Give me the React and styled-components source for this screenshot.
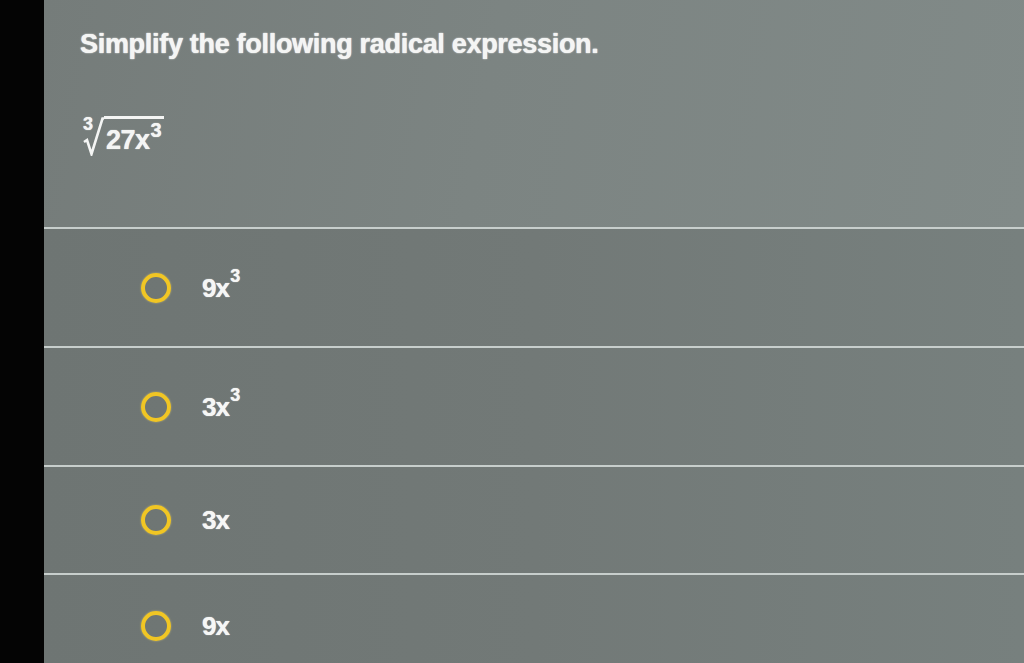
import React from "react";
import styled, { createGlobalStyle } from "styled-components";

const Global = createGlobalStyle`
  html, body { margin: 0; padding: 0; background: #050505; }
  body { font-family: "Liberation Sans", Arial, sans-serif; }
  #root { width: 1024px; height: 663px; overflow: hidden; }
`;

const Screen = styled.div`
  display: flex;
  width: 1024px;
  height: 663px;
  background: #050505;
`;

const Bezel = styled.div`
  width: 44px;
  flex: none;
  background: #040404;
`;

const Panel = styled.main`
  flex: 1;
  display: flex;
  flex-direction: column;
  overflow: hidden;
  background: linear-gradient(90deg, #6e7573 0%, #727977 50%, #77807e 100%);
`;

const Header = styled.header`
  height: 227px;
  flex: none;
  box-sizing: border-box;
  padding: 29px 0 0 36px;
  background: linear-gradient(100deg, #757c7a 0%, #7c8482 45%, #818a88 100%);
`;

const Title = styled.h1`
  margin: 0;
  font-family: "Liberation Sans", Arial, sans-serif;
  font-weight: 700;
  font-size: 27px;
  line-height: 30px;
  letter-spacing: -0.3px;
  color: #f4f5f4;
  text-shadow: 0 0 1px #ffffff, 0 0 2px rgba(255, 255, 255, 0.5);
`;

const Expr = styled.div`
  display: flex;
  align-items: flex-start;
  margin: 57px 0 0 3px;
  color: #f4f5f4;
  font-family: "Liberation Sans", Arial, sans-serif;
  font-weight: 700;
  text-shadow: 0 0 1px #ffffff;
`;

const RootSign = styled.div`
  position: relative;
  width: 21px;
  height: 40px;
  flex: none;
`;

const Index = styled.span`
  position: absolute;
  left: 0;
  top: -1px;
  font-size: 18px;
  line-height: 18px;
`;

const Radicand = styled.div`
  display: flex;
  align-items: flex-start;
  padding: 8px 3px 0 2px;
  border-top: 3px solid #f4f5f4;
  font-size: 27px;
  line-height: 26px;
  letter-spacing: -0.5px;
`;

const Sup = styled.span`
  font-size: ${(p) => p.$size}px;
  line-height: 1;
  margin-top: ${(p) => p.$raise}px;
  margin-left: 1px;
`;

const Option = styled.label`
  height: ${(p) => p.$h}px;
  flex: none;
  display: flex;
  align-items: center;
  box-sizing: border-box;
  padding-left: 97px;
  border-top: 2px solid #c7cecc;
  color: #f6f7f6;
  cursor: pointer;
`;

const Radio = styled.span`
  width: 30px;
  height: 30px;
  flex: none;
  box-sizing: border-box;
  border: 4.5px solid #f1c624;
  border-radius: 50%;
  box-shadow: 0 0 2px rgba(255, 230, 120, 0.6);
`;

const Answer = styled.span`
  display: flex;
  align-items: flex-start;
  margin-left: 31px;
  font-family: "Liberation Sans", Arial, sans-serif;
  font-weight: 700;
  font-size: 26px;
  line-height: 26px;
  letter-spacing: -0.9px;
  text-shadow: 0 0 1px #ffffff;
`;

const options = [
  { base: "9x", exp: "3", h: 119 },
  { base: "3x", exp: "3", h: 119 },
  { base: "3x", h: 108 },
  { base: "9x", h: 104 },
];

export default function App() {
  return (
    <Screen>
      <Global />
      <Bezel />
      <Panel>
        <Header>
          <Title>Simplify the following radical expression.</Title>
          <Expr>
            <RootSign>
              <Index>3</Index>
              <svg width="21" height="40" viewBox="0 0 21 40">
                <path
                  d="M1 26 L4 24 L8.5 38 L19.5 2.5 L21 2.5"
                  fill="none"
                  stroke="#f4f5f4"
                  strokeWidth="2.6"
                  strokeLinejoin="miter"
                />
              </svg>
            </RootSign>
            <Radicand>
              27x<Sup $size={20} $raise={-7}>3</Sup>
            </Radicand>
          </Expr>
        </Header>
        {options.map((o, i) => (
          <Option key={i} $h={o.h}>
            <Radio />
            <Answer>
              {o.base}
              {o.exp && <Sup $size={18} $raise={-8}>{o.exp}</Sup>}
            </Answer>
          </Option>
        ))}
      </Panel>
    </Screen>
  );
}
